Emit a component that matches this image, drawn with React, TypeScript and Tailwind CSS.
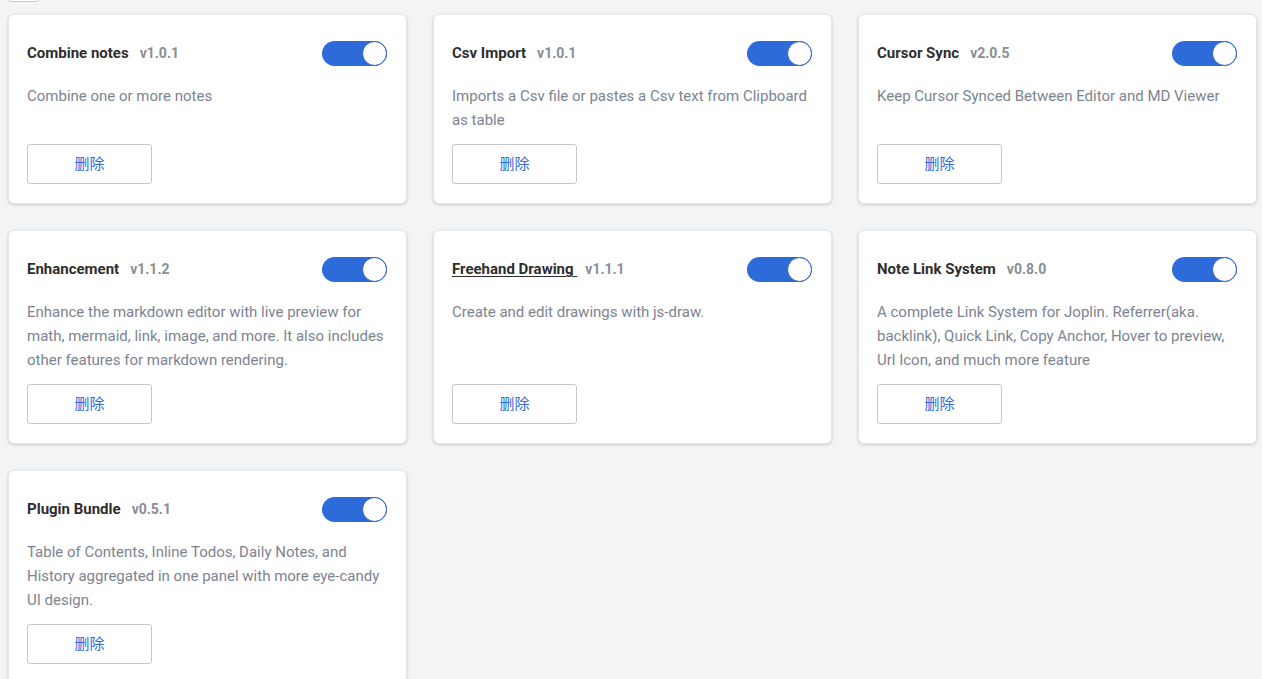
import * as React from 'react'

type Plugin = {
  name: string
  version: string
  description: string
  link?: boolean
}

const plugins: Plugin[] = [
  { name: 'Combine notes', version: 'v1.0.1', description: 'Combine one or more notes' },
  {
    name: 'Csv Import',
    version: 'v1.0.1',
    description: 'Imports a Csv file or pastes a Csv text from Clipboard as table',
  },
  {
    name: 'Cursor Sync',
    version: 'v2.0.5',
    description: 'Keep Cursor Synced Between Editor and MD Viewer',
  },
  {
    name: 'Enhancement',
    version: 'v1.1.2',
    description:
      'Enhance the markdown editor with live preview for math, mermaid, link, image, and more. It also includes other features for markdown rendering.',
  },
  {
    name: 'Freehand Drawing',
    version: 'v1.1.1',
    description: 'Create and edit drawings with js-draw.',
    link: true,
  },
  {
    name: 'Note Link System',
    version: 'v0.8.0',
    description:
      'A complete Link System for Joplin. Referrer(aka. backlink), Quick Link, Copy Anchor, Hover to preview, Url Icon, and much more feature',
  },
  {
    name: 'Plugin Bundle',
    version: 'v0.5.1',
    description:
      'Table of Contents, Inline Todos, Daily Notes, and History aggregated in one panel with more eye-candy UI design.',
  },
]

function Toggle({ checked, onChange }: { checked: boolean; onChange: () => void }) {
  return (
    <button
      type="button"
      onClick={onChange}
      className={`relative h-[25px] w-[65px] shrink-0 rounded-full ${checked ? 'bg-[#2d6bdb]' : 'bg-[#c4c7cc]'}`}
    >
      <span
        className={`absolute top-0 h-[25px] w-[25px] rounded-full border-[1.5px] bg-white ${checked ? 'right-0 border-[#2a5fc4]' : 'left-0 border-[#b0b4ba]'}`}
      />
    </button>
  )
}

function PluginCard({ plugin }: { plugin: Plugin }) {
  const [enabled, setEnabled] = React.useState(true)

  return (
    <div className="flex flex-1 flex-col rounded-md border border-[#e4e6ea] bg-white pb-[19px] pl-[18px] pr-[19px] pt-[26px] shadow-[0_1px_3px_rgba(0,0,0,0.18)]">
      <div className="flex h-[25px] items-center justify-between">
        <div className={`flex items-baseline ${plugin.link ? 'gap-[8px]' : 'gap-[11px]'}`}>
          <span
            className={`whitespace-pre text-[15px] font-bold text-[#2e2e2e] ${plugin.link ? 'underline underline-offset-2' : ''}`}
          >
            {plugin.link ? `${plugin.name} ` : plugin.name}
          </span>
          <span className="text-[14px] font-bold text-[#8a8d93]">{plugin.version}</span>
        </div>
        <Toggle checked={enabled} onChange={() => setEnabled(!enabled)} />
      </div>

      <p className="mb-[12px] mt-[18px] text-[15px] leading-[24px] text-[#7d8391]">
        {plugin.description}
      </p>

      <button
        type="button"
        className="mt-auto h-[40px] w-[125px] shrink-0 rounded-[3px] border border-[#c6c7ca] bg-white text-[15px] text-[#2f6bd6]"
      >
        删除
      </button>
    </div>
  )
}

export default function App() {
  return (
    <div
      className="min-h-[679px] bg-[#f3f4f6] pl-2 pr-[5px]"
      style={{ fontFamily: 'Roboto, "Noto Sans CJK SC", sans-serif' }}
    >
      <div className="-mt-[28px] h-[30px] w-[31px] rounded-[3px] border border-[#c6c7ca] bg-white" />
      <div className="mt-[12px] grid grid-cols-3 gap-[26px]">
        {plugins.map((plugin) => (
          <div key={plugin.name} className="flex flex-col">
            <PluginCard plugin={plugin} />
          </div>
        ))}
      </div>
    </div>
  )
}
